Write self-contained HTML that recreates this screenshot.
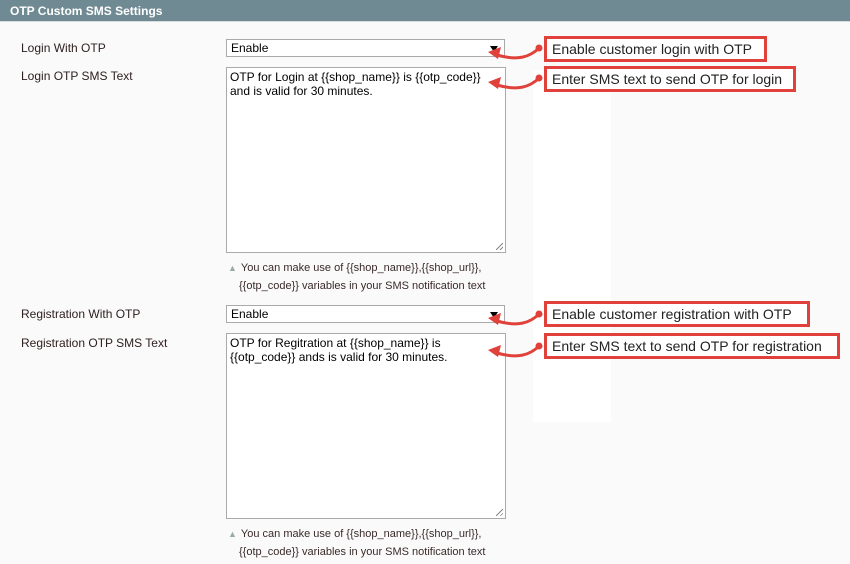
<!DOCTYPE html>
<html><head><meta charset="utf-8"><style>
body{margin:0;width:850px;height:564px;background:#fafafa;font-family:"Liberation Sans",Arial,sans-serif;position:relative;overflow:hidden;color:#2f2f2f}
.hd{position:absolute;left:0;top:0;width:850px;height:22px;background:#6f8a93;color:#fff;font-weight:bold;font-size:12px;line-height:22px;padding-left:10px;box-sizing:border-box;border-bottom:1px solid #d6dde0}
.lb{position:absolute;left:21px;font-size:12px;color:#2f2020}
.sel{position:absolute;left:226px;width:279px;height:18px;border:1px solid #aaa;background:#fff;box-sizing:border-box;font-size:12px;line-height:16px;padding-left:4px;color:#000}
.sel:after{content:"";position:absolute;right:6px;top:6px;border:4px solid transparent;border-top:6px solid #000}
.ta{position:absolute;left:226px;width:280px;height:186px;border:1px solid #aaa;background:#fff;box-sizing:border-box;font-size:12px;line-height:14px;padding:2px 3px;color:#000}
.ta:after{content:"";position:absolute;right:2px;bottom:2px;width:7px;height:7px;background:linear-gradient(135deg,transparent 45%,#888 45%,#888 55%,transparent 55%,transparent 75%,#888 75%,#888 85%,transparent 85%)}
.nt{position:absolute;left:228px;font-size:11px;line-height:18px;color:#3a2a2a}
.nt b{font-weight:normal;color:#9aa;font-size:9px;margin-right:4px}
.co{position:absolute;left:544px;height:26px;border:3px solid #e0413a;box-sizing:border-box;background:#fff;font-size:14px;line-height:20px;padding-left:5px;color:#222}
.wb{position:absolute;left:533px;top:70px;width:78px;height:352px;background:#fff}
</style></head><body>
<div class="hd">OTP Custom SMS Settings</div>
<div class="wb"></div>
<div class="lb" style="top:41px">Login With OTP</div>
<div class="lb" style="top:69px">Login OTP SMS Text</div>
<div class="sel" style="top:39px">Enable</div>
<div class="ta" style="top:67px">OTP for Login at {{shop_name}} is {{otp_code}}<br>and is valid for 30 minutes.</div>
<div class="nt" style="top:259px"><b>▲</b>You can make use of {{shop_name}},{{shop_url}},<br><span style="padding-left:11px">{{otp_code}} variables in your SMS notification text</span></div>
<div class="lb" style="top:307px">Registration With OTP</div>
<div class="lb" style="top:336px">Registration OTP SMS Text</div>
<div class="sel" style="top:305px">Enable</div>
<div class="ta" style="top:333px">OTP for Regitration at {{shop_name}} is<br>{{otp_code}} ands is valid for 30 minutes.</div>
<div class="nt" style="top:525px"><b>▲</b>You can make use of {{shop_name}},{{shop_url}},<br><span style="padding-left:11px">{{otp_code}} variables in your SMS notification text</span></div>
<div class="co" style="top:36px;width:223px">Enable customer login with OTP</div>
<div class="co" style="top:66px;width:252px">Enter SMS text to send OTP for login</div>
<div class="co" style="top:301px;width:266px">Enable customer registration with OTP</div>
<div class="co" style="top:333px;width:296px">Enter SMS text to send OTP for registration</div>
<svg width="850" height="564" style="position:absolute;left:0;top:0" fill="#e0413a" stroke="#e0413a">
<g id="a"><path d="M539 48 C530 57 518 61 497 55" fill="none" stroke-width="3"/><circle cx="539" cy="48" r="3.5" stroke="none"/><path d="M488 52 L501 47 L498 59 Z" stroke="none"/></g>
<use href="#a" y="30"/><use href="#a" y="266"/><use href="#a" y="298"/>
</svg>
</body></html>
